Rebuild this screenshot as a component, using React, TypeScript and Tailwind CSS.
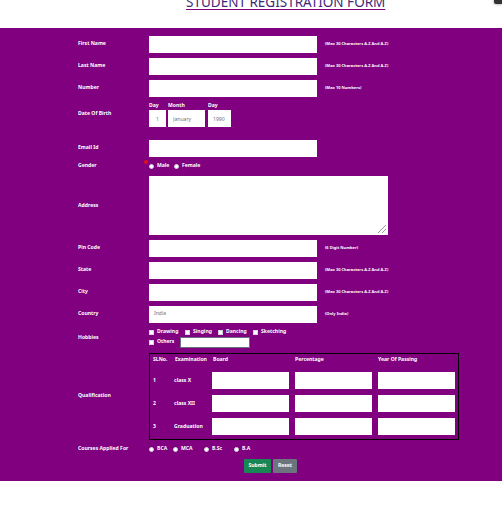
const sans = "font-['Noto_Sans','Open_Sans',sans-serif]";

function Row({ label, hint, value, className = "mt-[5px]" }: { label: string; hint?: string; value?: string; className?: string }) {
  return (
    <div className={`flex ${className}`}>
      <label className="w-[71px] text-[5.1px] leading-[7px] font-bold text-white pt-[4px]">{label}</label>
      <input readOnly placeholder={value} className="w-[168px] h-[17px] bg-white px-[5px] pb-[3px] text-[5.1px] text-gray-500 placeholder:text-gray-500 outline-none" />
      {hint && <span className="ml-[8px] text-[4px] leading-[7px] font-bold text-white pt-[4px] whitespace-nowrap">{hint}</span>}
    </div>
  );
}

function Radio({ label, className = "" }: { label: string; className?: string }) {
  return (
    <span className={`flex items-start ${className}`}>
      <span className="w-[5px] h-[5px] mt-[2px] rounded-full bg-white border border-gray-300" />
      <span className="ml-[3px] text-[5.1px] leading-[6px] font-bold text-white">{label}</span>
    </span>
  );
}

function Check({ label, className = "" }: { label: string; className?: string }) {
  return (
    <span className={`flex items-start ${className}`}>
      <span className="w-[5px] h-[5px] mt-[2px] bg-white border border-gray-300" />
      <span className="ml-[3px] text-[5.1px] leading-[6px] font-bold text-white">{label}</span>
    </span>
  );
}

function Field() {
  return <input readOnly className="w-[77px] h-[17px] bg-white outline-none" />;
}

function QualRow({ n, name, className = "mt-[6px]" }: { n: string; name: string; className?: string }) {
  return (
    <div className={`flex items-center h-[17px] ${className}`}>
      <span className="w-[22px] pl-[1px] text-[5.1px] font-bold text-white">{n}</span>
      <span className="w-[38px] text-[5.1px] font-bold text-white">{name}</span>
      <div className="flex gap-[6px]">
        <Field />
        <Field />
        <Field />
      </div>
    </div>
  );
}

const max = "(Max 30 Characters A-Z And A-Z)";

export default function App() {
  return (
    <div className={`relative w-[502px] h-[532px] bg-white overflow-hidden ${sans}`}>
      <div className="absolute top-0 right-0 w-[8px] h-[4px] bg-[#333333] rounded-bl-[2px] shadow-[0_0_3px_rgba(0,0,0,0.5)]" />
      <header className="h-[28px] overflow-hidden pl-[186px]">
        <h1 className="-mt-[6px] text-[13.5px] leading-[17px] font-normal whitespace-nowrap text-[#3f2a7a] underline decoration-[#800080] decoration-1 underline-offset-[2px]">
          STUDENT REGISTRATION FORM
        </h1>
      </header>
      <main className="relative bg-[#800080] h-[453px] pl-[78px] pt-[8px]">
        <span className="absolute z-10 left-[144px] top-[132px] w-[4px] h-[4px] rounded-full bg-[#e0101a]" />
        <Row label="First Name" hint={max} className="" />
        <Row label="Last Name" hint={max} />
        <Row label="Number" hint="(Max 10 Numbers)" />

        <div className="flex mt-[5px] h-[25px]">
          <label className="w-[71px] text-[5.1px] leading-[7px] font-bold text-white pt-[8px]">Date Of Birth</label>
          <div className="flex gap-[2px] text-white font-bold text-[5.1px] leading-[7px]">
            <div className="flex flex-col w-[17px]">
              <span className="h-[8px]">Day</span>
              <input readOnly placeholder="1" className="w-[17px] h-[17px] bg-white text-center text-[5.1px] font-normal placeholder:text-gray-500 outline-none" />
            </div>
            <div className="flex flex-col w-[37px]">
              <span className="h-[8px]">Month</span>
              <input readOnly placeholder="January" className="w-[37px] h-[17px] bg-white pl-[5px] text-[5.1px] font-normal placeholder:text-gray-500 outline-none" />
            </div>
            <div className="flex flex-col w-[23px] ml-[1px]">
              <span className="h-[8px]">Day</span>
              <input readOnly placeholder="1990" className="w-[23px] h-[17px] bg-white pl-[5px] text-[5.1px] font-normal placeholder:text-gray-500 outline-none" />
            </div>
          </div>
        </div>

        <Row label="Email Id" className="mt-[13px]" />

        <div className="flex mt-[5px] h-[14px]">
          <label className="w-[71px] text-[5.1px] leading-[7px] font-bold text-white">Gender</label>
          <Radio label="Male" className="w-[25px]" />
          <Radio label="Female" />
        </div>

        <div className="flex">
          <label className="w-[71px] self-center text-[5.1px] leading-[7px] font-bold text-white">Address</label>
          <div className="relative w-[239px] h-[59px] bg-white">
            <svg className="absolute right-[2px] bottom-[2px]" width="8" height="8" viewBox="0 0 8 8" fill="none" stroke="#444444" strokeWidth="0.8" strokeDasharray="1 0.4">
              <path d="M0 8 L8 0 M4 8 L8 4" />
            </svg>
          </div>
        </div>

        <Row label="Pin Code" hint="(6 Digit Number)" />
        <Row label="State" hint={max} />
        <Row label="City" hint={max} />
        <Row label="Country" hint="(Only India)" value="India" />

        <div className="flex mt-[5px] h-[25px]">
          <label className="w-[71px] pt-[6px] text-[5.1px] leading-[7px] font-bold text-white">Hobbies</label>
          <div className="flex flex-col">
            <div className="flex h-[9px] items-start">
              <Check label="Drawing" className="w-[36px]" />
              <Check label="Singing" className="w-[33px]" />
              <Check label="Dancing" className="w-[35px]" />
              <Check label="Sketching" />
            </div>
            <div className="flex items-start">
              <Check label="Others" className="w-[31px] mt-[1px]" />
              <input readOnly className="w-[70px] h-[11px] bg-white border border-gray-500 outline-none" />
            </div>
          </div>
        </div>

        <div className="flex">
          <label className="w-[71px] self-center mb-[3px] text-[5.1px] leading-[7px] font-bold text-white">Qualification</label>
          <div className="w-[310px] h-[87px] border border-black pl-[2px]">
            <div className="flex h-[12px] mb-[6px] items-center text-[5.1px] font-bold text-white">
              <span className="w-[22px] pl-[1px]">SLNo.</span>
              <span className="w-[38px] pl-[1px]">Examination</span>
              <span className="w-[83px] pl-[1px]">Board</span>
              <span className="w-[83px]">Percentage</span>
              <span>Year Of Passing</span>
            </div>
            <QualRow n="1" name="class X" className="" />
            <QualRow n="2" name="class XII" />
            <QualRow n="3" name="Graduation" />
          </div>
        </div>

        <div className="flex mt-[5px] h-[10px]">
          <label className="w-[71px] text-[5.1px] leading-[7px] font-bold text-white">Courses Applied For</label>
          <Radio label="BCA" className="w-[24px]" />
          <Radio label="MCA" className="w-[31px]" />
          <Radio label="B.Sc" className="w-[30px]" />
          <Radio label="B.A" />
        </div>

        <div className="flex gap-[2px] ml-[166px] mt-[4px]">
          <button className="w-[27px] h-[14px] bg-[#198754] rounded-[1px] text-[5.1px] font-bold text-white">Submit</button>
          <button className="w-[24px] h-[14px] bg-[#6c757d] rounded-[1px] text-[5.1px] font-bold text-white">Reset</button>
        </div>
      </main>
    </div>
  );
}
